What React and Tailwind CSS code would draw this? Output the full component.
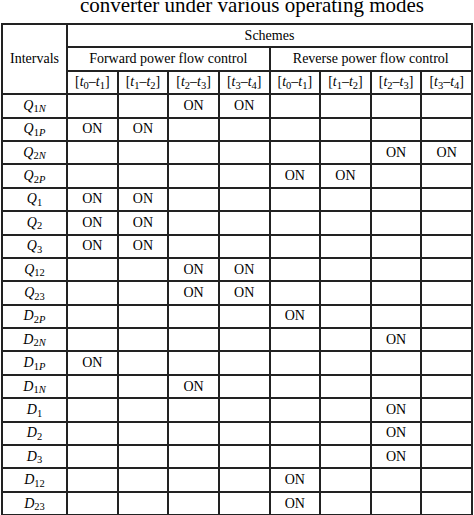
import React from "react";

const COLS = ["F1", "F2", "F3", "F4", "R1", "R2", "R3", "R4"];

// label letter, subscript, columns where the switch is ON
const rows = [
  ["Q", "1N", ["F3", "F4"]],
  ["Q", "1P", ["F1", "F2"]],
  ["Q", "2N", ["R3", "R4"]],
  ["Q", "2P", ["R1", "R2"]],
  ["Q", "1", ["F1", "F2"]],
  ["Q", "2", ["F1", "F2"]],
  ["Q", "3", ["F1", "F2"]],
  ["Q", "12", ["F3", "F4"]],
  ["Q", "23", ["F3", "F4"]],
  ["D", "2P", ["R1"]],
  ["D", "2N", ["R3"]],
  ["D", "1P", ["F1"]],
  ["D", "1N", ["F3"]],
  ["D", "1", ["R3"]],
  ["D", "2", ["R3"]],
  ["D", "3", ["R3"]],
  ["D", "12", ["R1"]],
  ["D", "23", ["R1"]],
];

const Sub = ({ text }) => (
  <sub className="text-[10.5px]">
    {text.split("").map((ch, i) =>
      /[A-Z]/.test(ch) ? (
        <i key={i}>{ch}</i>
      ) : (
        <span key={i}>{ch}</span>
      )
    )}
  </sub>
);

const Interval = ({ a, b }) => (
  <span>
    [<i>t</i>
    <Sub text={a} />–<i>t</i>
    <Sub text={b} />]
  </span>
);

const cell = "border-2 border-[#222] p-0 text-center align-middle";

export default function App() {
  return (
    <div className="w-[474px] h-[515px] overflow-hidden bg-white font-['Liberation_Serif','Times_New_Roman',serif] text-black">
      <div className="h-[23px] overflow-hidden">
        <p className="-mt-[5px] pl-[30px] text-center text-[21px] leading-none whitespace-nowrap">
          converter under various operating modes
        </p>
      </div>
      <table className="ml-[1px] w-[472px] table-fixed border-collapse border-2 border-[#333] text-[14px] leading-none">
        <colgroup>
          <col className="w-[65px]" />
          {COLS.map((c) => (
            <col key={c} />
          ))}
        </colgroup>
        <thead>
          <tr className="h-[23.4px]">
            <th rowSpan={3} className={cell + " font-normal"}>
              Intervals
            </th>
            <th colSpan={8} className={cell + " font-normal"}>
              Schemes
            </th>
          </tr>
          <tr className="h-[23.4px]">
            <th colSpan={4} className={cell + " font-normal"}>
              Forward power flow control
            </th>
            <th colSpan={4} className={cell + " font-normal"}>
              Reverse power flow control
            </th>
          </tr>
          <tr className="h-[23.4px]">
            {[0, 1].map((k) =>
              [
                ["0", "1"],
                ["1", "2"],
                ["2", "3"],
                ["3", "4"],
              ].map(([a, b]) => (
                <th key={k + a} className={cell + " font-normal"}>
                  <Interval a={a} b={b} />
                </th>
              ))
            )}
          </tr>
        </thead>
        <tbody>
          {rows.map(([letter, sub, on], index) => (
            <tr key={index} className="h-[23.4px]">
              <td className={cell}>
                <i>{letter}</i>
                <Sub text={sub} />
              </td>
              {COLS.map((c) => (
                <td key={c} className={cell}>
                  {on.includes(c) ? "ON" : ""}
                </td>
              ))}
            </tr>
          ))}
        </tbody>
      </table>
      <div className="h-[6px] bg-[#e4e4e4]" />
    </div>
  );
}
